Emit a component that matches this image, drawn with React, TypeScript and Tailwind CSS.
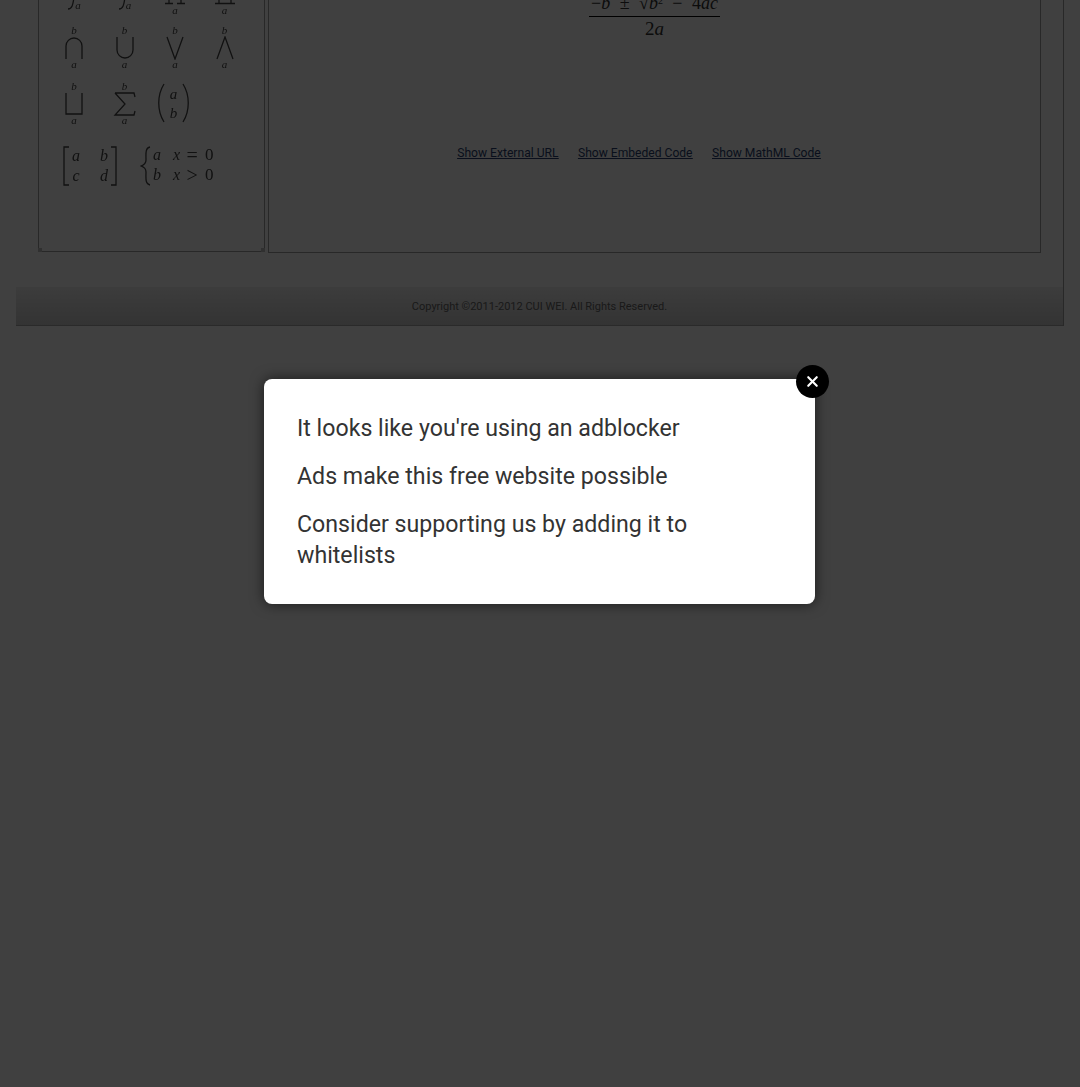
import { X } from "lucide-react";

const serif = "font-['Liberation_Serif',serif] italic";

// one big operator with its limits above and below
function Op({ children }: { children: React.ReactNode }) {
  return (
    <div className={`flex h-[45px] flex-col items-center text-[#444] ${serif}`}>
      <span className="text-[11px] leading-[11px]">b</span>
      <div className="h-[24px]">{children}</div>
      <span className="-mt-[1px] text-[11px] leading-[11px]">a</span>
    </div>
  );
}

function Sym({ d, w = 20, h = 24 }: { d: string; w?: number; h?: number }) {
  return (
    <svg width={w} height={h} viewBox={`0 0 ${w} ${h}`} fill="none" stroke="#444" strokeWidth="1.3">
      <path d={d} />
    </svg>
  );
}

function Foot({ d }: { d: string }) {
  return (
    <div className={`flex h-[45px] flex-col items-center justify-end text-[11px] leading-[8px] text-[#444] ${serif}`}>
      <Sym w={22} h={8} d={d} />a
    </div>
  );
}

function IntegralFoot() {
  return (
    <div className={`flex h-[45px] items-end justify-center pb-[3px] text-[11px] leading-[11px] text-[#444] ${serif}`}>
      <Sym w={8} h={14} d="M7 0C6 8 5 12 1 12" />
      a
    </div>
  );
}

function Relation({ op }: { op: string }) {
  return (
    <span className="flex items-center">
      x
      <span className="ml-[6px] w-[12px] text-center text-[20px] leading-[20px] not-italic">{op}</span>
      <span className="ml-[7px] text-[17px] not-italic">0</span>
    </span>
  );
}

function LeftPanel() {
  return (
    <div className="relative h-[352px] w-[227px] rounded-b-[3px] border-x border-b border-[#a0a0a0] pt-[69px] text-[#444]">
      <div className="blur-[0.3px]">
        <div className="grid grid-cols-[50px_51px_50px_49px] gap-y-[11px] pl-[10px]">
          {/* cut off row, only the foot of it shows */}
          <IntegralFoot />
          <IntegralFoot />
          <Foot d="M5 0V5.5M17 0V5.5M1 5.5H9M13 5.5H21" />
          <Foot d="M1 5.5H21M5 0V5.5M17 0V5.5" />

          <Op><Sym d="M2 23V10a8 8 0 0 1 16 0V23" /></Op>
          <Op><Sym d="M2 1V14a8 8 0 0 0 16 0V1" /></Op>
          <Op><Sym d="M2 1L10 23L18 1" /></Op>
          <Op><Sym d="M2 23L10 1L18 23" /></Op>

          <Op><Sym d="M2 1V22H18V1" /></Op>
          <Op><Sym w={24} d="M2 1H21L22 5M2 1L12 12L2 23H21L22 19" /></Op>
          <div className={`flex h-[47px] items-center justify-center pb-[4px] pr-[3px] text-[15px] ${serif}`}>
            <Sym w={8} h={40} d="M7 1C0 12 0 28 7 39" />
            <div className="mt-[3px] flex w-[17px] flex-col items-center leading-[19px]">
              <span>a</span>
              <span>b</span>
            </div>
            <Sym w={8} h={40} d="M1 1C8 12 8 28 1 39" />
          </div>
        </div>

        <div className={`mt-[17px] flex items-center pl-[23px] text-[16px] ${serif}`}>
          <Sym w={8} h={40} d="M7 1H2V39H7" />
          <div className="ml-[1px] grid grid-cols-[10px_10px] gap-x-[18px] text-center leading-[20px]">
            <span>a</span>
            <span>b</span>
            <span>c</span>
            <span>d</span>
          </div>
          <div className="ml-[1px]">
            <Sym w={8} h={40} d="M1 1H6V39H1" />
          </div>
          <div className="ml-[22px]">
            <Sym w={11} h={40} d="M10 1C5 2 6 8 6 14C6 18 4 19 1 20C4 21 6 22 6 26C6 32 5 38 10 39" />
          </div>
          <div className="mb-[2px] ml-[2px] grid grid-cols-[20px_auto] leading-[20px]">
            <span>a</span>
            <Relation op="=" />
            <span>b</span>
            <Relation op=">" />
          </div>
        </div>
      </div>

      <span className="absolute -bottom-px -left-px size-[4px] bg-[#c0c0c0]" />
      <span className="absolute -bottom-px -right-px size-[4px] bg-[#c0c0c0]" />
    </div>
  );
}

function RightPanel() {
  return (
    <div className="ml-[3px] flex h-[353px] w-[773px] flex-col items-center border-x border-b border-[#a0a0a0]">
      <div className={`mt-[92px] flex w-[131px] flex-col items-center text-[18px] text-[#333] ${serif}`}>
        <div className="flex h-[25px] w-full items-end justify-between whitespace-nowrap border-b border-[#000] px-[2px] pb-[3px] leading-[20px]">
          <span><span className="not-italic">−</span>b</span>
          <span className="not-italic">±</span>
          <span><span className="not-italic">√</span>b<sup className="text-[10px] not-italic">2</sup></span>
          <span className="not-italic">−</span>
          <span><span className="not-italic">4</span>ac</span>
        </div>
        <div className="text-[19px] leading-[23px]">
          <span className="not-italic">2</span>a
        </div>
      </div>
      <div className="-ml-[31px] mt-[105px] flex gap-[19.5px] font-['Roboto',sans-serif] text-[12.1px] leading-[16px] text-[#2a3f6f] underline">
        <a>Show External URL</a>
        <a>Show Embeded Code</a>
        <a>Show MathML Code</a>
      </div>
    </div>
  );
}

export default function App() {
  return (
    <div className="relative h-[1087px] overflow-hidden bg-white">
      <div className="-mt-[100px] ml-[16px] w-[1048px] border-r border-[#a0a0a0]">
        <div className="flex pl-[22px]">
          <LeftPanel />
          <RightPanel />
        </div>
        <footer className="mt-[34px] flex h-[39px] items-center justify-center border-b border-[#a8a8a8] bg-gradient-to-b from-[#f0f0f0] to-[#cccccc] pt-[2px] font-['Roboto',sans-serif] text-[11px] text-[#666]">
          Copyright ©2011-2012 CUI WEI. All Rights Reserved.
        </footer>
      </div>

      {/* adblock notice over the dimmed page */}
      <div className="absolute inset-0 bg-black/75" />
      <div className="absolute left-[264px] top-[379px] w-[551px] rounded-[8px] bg-white px-[33px] pb-[33px] pt-[34px] font-['Roboto',sans-serif] text-[23.17px] leading-[31px] text-[#333] shadow-[0_0_14px_rgba(0,0,0,0.6)]">
        <p>It looks like you're using an adblocker</p>
        <p className="mt-[17px]">Ads make this free website possible</p>
        <p className="mt-[17px]">Consider supporting us by adding it to whitelists</p>
        <button className="absolute -right-[14px] -top-[14px] flex size-[33px] items-center justify-center rounded-full bg-black text-white">
          <X size={17} strokeWidth={3} />
        </button>
      </div>
    </div>
  );
}
